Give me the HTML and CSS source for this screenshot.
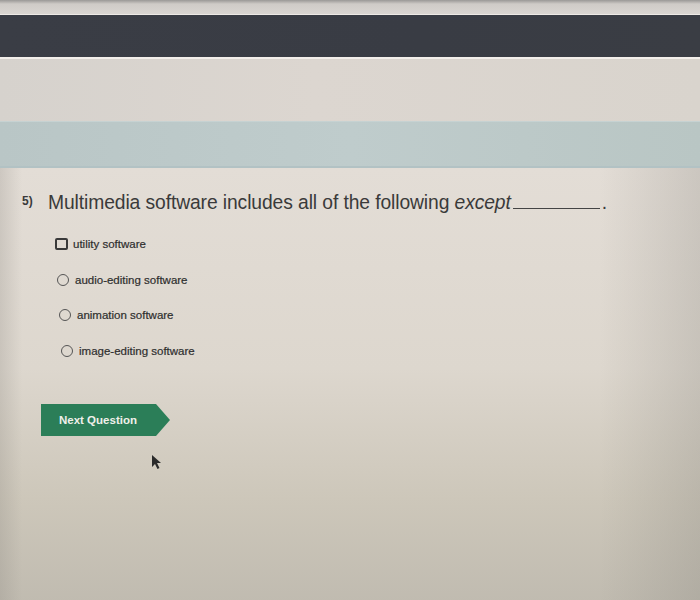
FILE: index.html
```html
<!DOCTYPE html>
<html>
<head>
<meta charset="utf-8">
<link rel="stylesheet" href="styles.css">
</head>
<body>
<div class="page">
  <div class="topstrip"></div>
  <div class="darkbar"></div>
  <div class="lightarea"></div>
  <div class="band"></div>
  <main class="main">
    <div class="question">
      <span class="qnum">5)</span>
      <span class="qtext">Multimedia software includes all of the following <em>except</em><span class="blank"></span>.</span>
    </div>
    <ul class="options">
      <li class="opt o1"><span class="box"></span>utility software</li>
      <li class="opt o2"><span class="radio"></span>audio-editing software</li>
      <li class="opt o3"><span class="radio"></span>animation software</li>
      <li class="opt o4"><span class="radio"></span>image-editing software</li>
    </ul>
    <div class="btnrow">
      <div class="nextbtn">Next Question</div>
    </div>
    <svg class="cursor" width="12" height="16" viewBox="0 0 12 16"><path d="M1 1 L1 13 L4 10 L6.5 15 L8.5 14 L6 9 L10 9 Z" fill="#2a2a2a"/></svg>
  </main>
</div>
</body>
</html>
```
FILE: styles.css
```css
html, body { margin: 0; padding: 0; }
body { width: 700px; height: 600px; overflow: hidden; font-family: "Liberation Sans", Arial, sans-serif; background: #b8b4ab; }
.page { width: 700px; height: 600px; display: flex; flex-direction: column; position: relative; }
.topstrip { height: 14px; background: linear-gradient(#9a9896 0, #cfcbc7 4px, #d9d5d1 100%); border-bottom: 1px solid #eeeae6; }
.darkbar { height: 42px; background: linear-gradient(90deg, #3a3d45, #393c44 60%, #3a3d44); border-bottom: 2px solid #f2eeea; }
.lightarea { height: 62px; background: linear-gradient(90deg, #d6d2cd, #dcd6d0 45%, #d9d4cd 100%); }
.band { height: 44px; background: linear-gradient(90deg, #b9c6c6, #bfcccc 50%, #b9c6c4 100%); border-top: 1px solid #c6d2d2; border-bottom: 2px solid #b2c2c4; }
.main { flex: 1; position: relative; padding: 0 0 0 22px;
  background:
    linear-gradient(90deg, rgba(140,136,130,0.25) 0, rgba(140,136,130,0.0) 22px, rgba(0,0,0,0) 600px, rgba(120,118,112,0.22) 700px),
    linear-gradient(180deg, #e3ddd6 0, #ddd7ce 200px, #cdc7ba 330px, #c0bbb0 435px);
}
.question { display: flex; align-items: baseline; margin-top: 24px; color: #3a3a3a; }
.qnum { font-size: 12px; font-weight: bold; width: 26px; position: relative; top: -4px; }
.qtext { font-size: 19.3px; letter-spacing: -0.1px; }
.qtext em { font-style: italic; }
.blank { display: inline-block; width: 87px; border-bottom: 1.5px solid #444; margin-left: 2px; margin-right: 2px; }
.options { list-style: none; margin: 23px 0 0 0; padding: 0; }
.opt { display: flex; align-items: center; font-size: 11.5px; color: #2e2e2e; height: 14px; margin-bottom: 21.5px; -webkit-text-stroke: 0.2px #2e2e2e; }
.o1 { margin-left: 33px; }
.o2 { margin-left: 35px; }
.o3 { margin-left: 37px; }
.o4 { margin-left: 39px; }
.box { width: 9px; height: 8px; border: 2px solid #3a3a3a; border-radius: 2px; margin-right: 5px; }
.radio { width: 10px; height: 10px; border: 1.3px solid #555; border-radius: 50%; margin-right: 6px; box-sizing: content-box; }
.btnrow { margin-top: 46px; margin-left: 19px; display: flex; }
.nextbtn { position: relative; width: 115px; height: 32px; line-height: 32px; padding-left: 18px; box-sizing: border-box; background: #2b7e58; color: #f0f0ea; font-size: 11.5px; font-weight: bold; }
.nextbtn::after { content: ""; position: absolute; right: -14px; top: 0; border-left: 14px solid #2b7e58; border-top: 16px solid transparent; border-bottom: 16px solid transparent; }
.cursor { position: absolute; left: 151px; top: 286px; }
```
